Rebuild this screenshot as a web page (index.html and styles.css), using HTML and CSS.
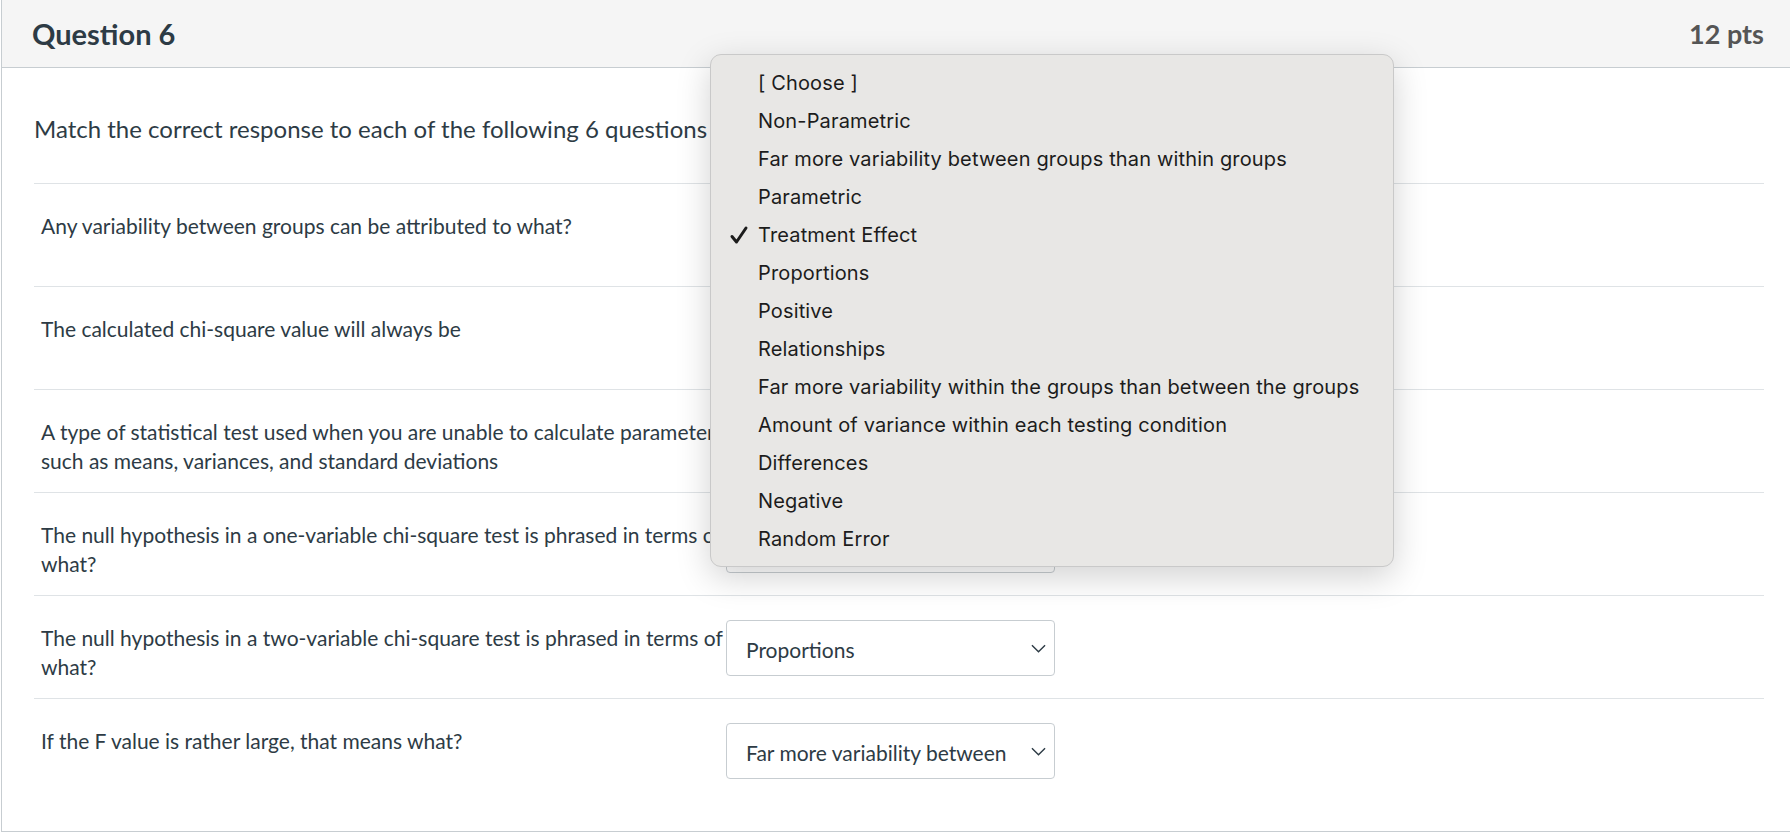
FILE: index.html
```html
<!DOCTYPE html>
<html>
<head>
    <link rel="stylesheet" href="styles.css">
</head>
<body>
    <div class="question">
        <div class="question-header">
            <h2 class="question-name">Question 6</h2>
            <span class="question-points">12 pts</span>
        </div>

        <div class="question-body">
            <p class="question-text">Match the correct response to each of the following 6 questions</p>

            <div class="answer-row">
                <div class="answer-prompt">Any variability between groups can be attributed to what?</div>
                <div class="answer-select">
                    <span class="select-value">Treatment Effect</span>
                    <svg class="select-arrow" viewBox="0 0 16 9"><path d="M1 1 L8 8 L15 1"/></svg>
                </div>
            </div>

            <div class="answer-row">
                <div class="answer-prompt">The calculated chi-square value will always be</div>
                <div class="answer-select">
                    <span class="select-value">Positive</span>
                    <svg class="select-arrow" viewBox="0 0 16 9"><path d="M1 1 L8 8 L15 1"/></svg>
                </div>
            </div>

            <div class="answer-row">
                <div class="answer-prompt">A type of statistical test used when you are unable to calculate parameters such as means, variances, and standard deviations</div>
                <div class="answer-select">
                    <span class="select-value">Non-Parametric</span>
                    <svg class="select-arrow" viewBox="0 0 16 9"><path d="M1 1 L8 8 L15 1"/></svg>
                </div>
            </div>

            <div class="answer-row">
                <div class="answer-prompt">The null hypothesis in a one-variable chi-square test is phrased in terms of what?</div>
                <div class="answer-select">
                    <span class="select-value">Proportions</span>
                    <svg class="select-arrow" viewBox="0 0 16 9"><path d="M1 1 L8 8 L15 1"/></svg>
                </div>
            </div>

            <div class="answer-row">
                <div class="answer-prompt">The null hypothesis in a two-variable chi-square test is phrased in terms of what?</div>
                <div class="answer-select">
                    <span class="select-value">Proportions</span>
                    <svg class="select-arrow" viewBox="0 0 16 9"><path d="M1 1 L8 8 L15 1"/></svg>
                </div>
            </div>

            <div class="answer-row">
                <div class="answer-prompt">If the F value is rather large, that means what?</div>
                <div class="answer-select">
                    <span class="select-value">Far more variability between</span>
                    <svg class="select-arrow" viewBox="0 0 16 9"><path d="M1 1 L8 8 L15 1"/></svg>
                </div>
            </div>
        </div>
    </div>

    <!-- open native menu of the first select -->
    <ul class="popup-menu">
        <li>[ Choose ]</li>
        <li>Non-Parametric</li>
        <li>Far more variability between groups than within groups</li>
        <li>Parametric</li>
        <li class="checked"><svg class="check" viewBox="0 0 20 20"><path d="M3 11.5 L7.5 17 L17 3"/></svg>Treatment Effect</li>
        <li>Proportions</li>
        <li>Positive</li>
        <li>Relationships</li>
        <li>Far more variability within the groups than between the groups</li>
        <li>Amount of variance within each testing condition</li>
        <li>Differences</li>
        <li>Negative</li>
        <li>Random Error</li>
    </ul>
</body>
</html>
```

FILE: styles.css
```css
body {
    margin: 0;
    padding: 0;
    background: #ffffff;
    font-family: Lato, 'Liberation Sans', sans-serif;
    color: #2d3b45;
    overflow: hidden;
}
.question {
    margin-left: 1px;
    border-left: 1px solid #c7cdd1;
    border-bottom: 1px solid #c7cdd1;
    height: 832px;
    box-sizing: border-box;
}
.question-header {
    display: flex;
    justify-content: space-between;
    align-items: center;
    height: 67px;
    padding: 0 26px 0 30px;
    background: #f5f5f5;
    border-bottom: 1px solid #c7cdd1;
}
.question-name {
    margin: 0;
    font-size: 29px;
    font-weight: 700;
    color: #2d3b45;
}
.question-points {
    font-size: 27px;
    font-weight: 700;
    color: #555555;
}
.question-body {
    padding: 0 26px 0 32px;
}
.question-text {
    margin: 0;
    padding: 46px 0 39px;
    font-size: 24px;
    line-height: 30px;
}
.answer-row {
    display: flex;
    height: 103px;
    box-sizing: border-box;
    border-top: 1px solid #dfe3e6;
    padding-top: 24px;
}
.answer-prompt {
    width: 692px;
    padding: 3px 0 0 7px;
    font-size: 21px;
    line-height: 29px;
    box-sizing: border-box;
}
.answer-select {
    display: flex;
    align-items: center;
    width: 329px;
    height: 56px;
    box-sizing: border-box;
    border: 1px solid #c7cdd1;
    border-radius: 4px;
    padding: 0 8px 0 19px;
    font-size: 21px;
    background: #ffffff;
}
.select-value {
    flex: 1;
    white-space: nowrap;
    overflow: hidden;
    padding-top: 3px;
}
.select-arrow {
    width: 15px;
    height: 9px;
    margin-left: 12px;
    fill: none;
    stroke: #2d3b45;
    stroke-width: 1.5;
}
.popup-menu {
    position: absolute;
    left: 710px;
    top: 54px;
    width: 684px;
    height: 513px;
    box-sizing: border-box;
    margin: 0;
    padding: 9px 0 0;
    list-style: none;
    background: #e8e7e5;
    border: 1px solid #c9c9c9;
    border-radius: 11px;
    box-shadow: 0 10px 34px rgba(0, 0, 0, 0.18);
    font-family: Inter, Roboto, sans-serif;
    font-size: 20px;
    letter-spacing: 0.15px;
    color: #1c1c1c;
}
.popup-menu li {
    position: relative;
    height: 38px;
    line-height: 38px;
    padding-left: 47px;
}
.check {
    position: absolute;
    left: 18px;
    top: 9px;
    width: 20px;
    height: 20px;
    fill: none;
    stroke: #1c1c1c;
    stroke-width: 3;
    stroke-linecap: round;
    stroke-linejoin: round;
}
```
